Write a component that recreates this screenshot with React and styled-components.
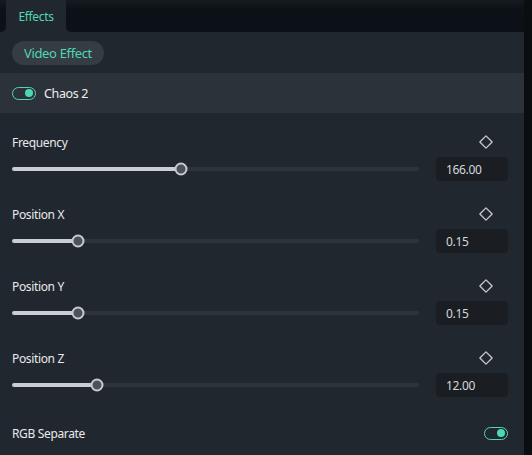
import styled, { createGlobalStyle } from "styled-components";

const GlobalStyle = createGlobalStyle`
    body {
        margin: 0;
        background: #0b0e11;
        font-family: "Noto Sans", "Open Sans", sans-serif;
        letter-spacing: -0.35px;
    }
`;

const Shell = styled.div`
    display: flex;
    width: 532px;
    height: 455px;
    overflow: hidden;
`;

const Panel = styled.div`
    flex: 1;
    display: flex;
    flex-direction: column;
    background: #21272e;
`;

const ScrollStrip = styled.div`
    width: 8px;
    background: #0b0e11;
`;

const TabBar = styled.div`
    display: flex;
    height: 32px;
    background: #21272e;
`;

const TabCap = styled.div`
    width: ${({ $grow }) => ($grow ? "auto" : "6px")};
    flex: ${({ $grow }) => ($grow ? 1 : "none")};
    background: linear-gradient(#161b20, #0c1118 30%);
    border-bottom-left-radius: ${({ $side }) => ($side === "right" ? "5px" : "0")};
    border-bottom-right-radius: ${({ $side }) => ($side === "left" ? "5px" : "0")};
`;

const Tab = styled.div`
    width: 60px;
    display: flex;
    align-items: center;
    justify-content: center;
    color: #4fd8b0;
    font-size: 12px;
    background: #21272e;
    border-radius: 4px 4px 0 0;
`;

const PillRow = styled.div`
    display: flex;
    padding: 9px 12px 8px;
`;

const Pill = styled.div`
    height: 24px;
    padding: 0 12px;
    display: flex;
    align-items: center;
    border-radius: 12px;
    background: #363c43;
    color: #4fd8b0;
    font-size: 13px;
`;

const EffectHeader = styled.div`
    height: 40px;
    display: flex;
    align-items: center;
    gap: 8px;
    padding: 0 12px;
    background: #2c3239;
    color: #eceef0;
    font-size: 12.5px;
`;

const Toggle = styled.div`
    width: 24px;
    height: 13px;
    box-sizing: border-box;
    border: 1.5px solid #4fd8b0;
    border-radius: 7px;
    display: flex;
    align-items: center;
    justify-content: flex-end;
    padding-right: 2px;

    &::after {
        content: "";
        width: 8px;
        height: 8px;
        border-radius: 50%;
        background: #4fd8b0;
    }
`;

const ParamList = styled.div`
    display: flex;
    flex-direction: column;
    gap: 24px;
    padding: 20px 16px 0 12px;
`;

const Param = styled.div`
    display: flex;
    flex-direction: column;
    gap: 6px;
`;

const LabelRow = styled.div`
    height: 18px;
    display: flex;
    align-items: center;
    justify-content: space-between;
`;

const Label = styled.span`
    color: #e8eaec;
    font-size: 12px;
`;

const KeyframeBox = styled.div`
    width: 44px;
    display: flex;
    justify-content: center;
    align-items: center;
`;

const ControlRow = styled.div`
    height: 24px;
    display: flex;
    align-items: center;
    gap: 17px;
`;

const Track = styled.div`
    position: relative;
    flex: 1;
    height: 4px;
    border-radius: 2px;
    background: #2e353a;
`;

const Fill = styled.div`
    height: 100%;
    border-radius: 2px;
    background: #c9ced3;
`;

const Thumb = styled.div`
    position: absolute;
    top: 50%;
    width: 13px;
    height: 13px;
    box-sizing: border-box;
    border-radius: 50%;
    border: 2px solid #c6cbd0;
    background: #4b5259;
    transform: translate(-50%, -50%);
`;

const ValueBox = styled.div`
    width: 72px;
    height: 24px;
    box-sizing: border-box;
    padding-left: 10px;
    display: flex;
    align-items: center;
    border-radius: 4px;
    background: #1a1e23;
    color: #d2d7dc;
    font-size: 12px;
`;

const SwitchRow = styled.div`
    display: flex;
    align-items: center;
    justify-content: space-between;
    height: 18px;
    margin-top: 3px;
`;

const Diamond = () => (
    <svg width="14" height="14" viewBox="0 0 14 14">
        <path
            d="M7 0.9 L13.1 7 L7 13.1 L0.9 7 Z"
            fill="none"
            stroke="#c8ccd1"
            strokeWidth="1.3"
            strokeLinejoin="round"
        />
    </svg>
);

const params = [
    { name: "Frequency", value: "166.00", pos: 0.415 },
    { name: "Position X", value: "0.15", pos: 0.162 },
    { name: "Position Y", value: "0.15", pos: 0.162 },
    { name: "Position Z", value: "12.00", pos: 0.209 },
];

function Slider({ pos }) {
    const pct = `${pos * 100}%`;
    return (
        <Track>
            <Fill style={{ width: pct }} />
            <Thumb style={{ left: pct }} />
        </Track>
    );
}

export default function App() {
    return (
        <>
            <GlobalStyle />
            <Shell>
                <Panel>
                    <TabBar>
                        <TabCap $side="left" />
                        <Tab>Effects</Tab>
                        <TabCap $side="right" $grow />
                    </TabBar>
                    <PillRow>
                        <Pill>Video Effect</Pill>
                    </PillRow>
                    <EffectHeader>
                        <Toggle />
                        Chaos 2
                    </EffectHeader>
                    <ParamList>
                        {params.map((p) => (
                            <Param key={p.name}>
                                <LabelRow>
                                    <Label>{p.name}</Label>
                                    <KeyframeBox>
                                        <Diamond />
                                    </KeyframeBox>
                                </LabelRow>
                                <ControlRow>
                                    <Slider pos={p.pos} />
                                    <ValueBox>{p.value}</ValueBox>
                                </ControlRow>
                            </Param>
                        ))}
                        <SwitchRow>
                            <Label>RGB Separate</Label>
                            <Toggle />
                        </SwitchRow>
                    </ParamList>
                </Panel>
                <ScrollStrip />
            </Shell>
        </>
    );
}
